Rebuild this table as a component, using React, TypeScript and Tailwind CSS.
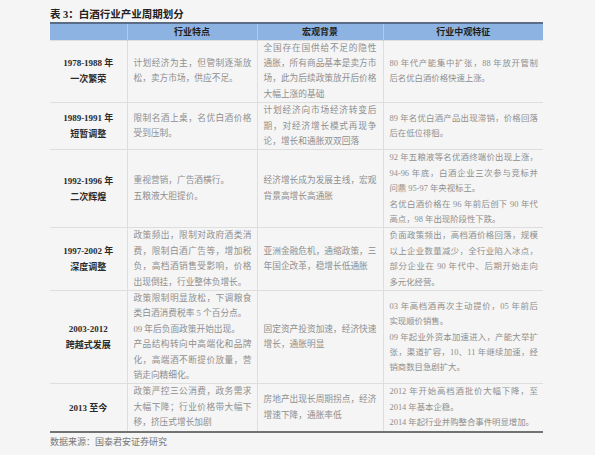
type Row = {
  period: string[];
  features: string[];
  macro: string[];
  traits: string[];
};

const rows: Row[] = [
  {
    period: ["1978-1988 年", "一次繁荣"],
    features: ["计划经济为主，但管制逐渐放", "松，卖方市场，供应不足。"],
    macro: ["全国存在国供给不足的隐性", "通胀，所有商品基本是卖方市", "场，此为后续政策放开后价格", "大幅上涨的基础"],
    traits: ["80 年代产能集中扩张，88 年放开管制", "后名优白酒价格快速上涨。"],
  },
  {
    period: ["1989-1991 年", "短暂调整"],
    features: ["限制名酒上桌，名优白酒价格", "受到压制。"],
    macro: ["计划经济向市场经济转变后", "期，对经济增长模式再现争", "论，增长和通胀双双回落"],
    traits: ["89 年名优白酒产品出现滞销，价格回落", "后在低位徘徊。"],
  },
  {
    period: ["1992-1996 年", "二次辉煌"],
    features: ["重视营销，广告酒横行。", "五粮液大胆提价。"],
    macro: ["经济增长成为发展主线，宏观", "背景高增长高通胀"],
    traits: [
      "92 年五粮液等名优酒终端价出现上涨，",
      "94-96 年底，白酒企业三次参与竞标并",
      "问鼎 95-97 年央视标王。",
      "名优白酒价格在 96 年前后创下 90 年代",
      "高点，98 年出现阶段性下跌。",
    ],
  },
  {
    period: ["1997-2002 年", "深度调整"],
    features: ["政策频出，限制对政府酒类消", "费，限制白酒广告等，增加税", "负，高档酒销售受影响，价格", "出现倒挂，行业整体负增长。"],
    macro: ["亚洲金融危机，通缩政策，三", "年国企改革，稳增长低通胀"],
    traits: ["负面政策频出，高档酒价格回落，规模", "以上企业数量减少，全行业陷入冰点，", "部分企业在 90 年代中、后期开始走向", "多元化经营。"],
  },
  {
    period: ["2003-2012", "跨越式发展"],
    features: [
      "政策限制明显放松，下调粮食",
      "类白酒消费税率 5 个百分点。",
      "09 年后负面政策开始出现。",
      "产品结构转向中高端化和品牌",
      "化，高端酒不断提价放量，营",
      "销走向精细化。",
    ],
    macro: ["固定资产投资加速，经济快速", "增长，通胀明显"],
    traits: [
      "03 年高档酒再次主动提价，05 年前后",
      "实现顺价销售。",
      "09 年起业外资本加速进入，产能大举扩",
      "张，渠道扩容，10、11 年继续加速，经",
      "销商数目急剧扩大。",
    ],
  },
  {
    period: ["2013 至今"],
    features: ["政策严控三公消费，政务需求", "大幅下降；行业价格带大幅下", "移，挤压式增长加剧"],
    macro: ["房地产出现长周期拐点，经济", "增速下降，通胀率低"],
    traits: ["2012 年开始高档酒批价大幅下降，至", "2014 年基本企稳。", "2014 年起行业并购整合事件明显增加。"],
  },
];

function Lines({ lines }: { lines: string[] }) {
  return (
    <>
      {lines.map((line, i) => {
        const plain = i === lines.length - 1 || line.endsWith("。");
        return (
          <div
            key={i}
            className={
              plain
                ? "overflow-visible whitespace-nowrap"
                : "overflow-visible whitespace-nowrap text-justify [text-align-last:justify]"
            }
          >
            {line}
          </div>
        );
      })}
    </>
  );
}

export default function App() {
  return (
    <div
      className="h-[455px] w-[595px] overflow-hidden bg-[#f5f5f5] pl-[50px] pt-[8px]"
      style={{ fontFamily: '"Liberation Serif", "Noto Sans CJK SC", serif' }}
    >
      <h1 className="text-[10.5px] font-bold leading-[14px] text-[#222]">表 3：白酒行业产业周期划分</h1>

      <table className="w-[493px] table-fixed border-collapse">
        <colgroup>
          <col className="w-[77px]" />
          <col className="w-[130px]" />
          <col className="w-[126px]" />
          <col className="w-[160px]" />
        </colgroup>
        <thead>
          <tr className="h-[17px] border-t-2 border-[#5b6c86] bg-[#8db3e2] text-[9px] font-bold leading-[14px] text-[#1e1e1e]">
            <th className="p-0" />
            <th className="border-l border-[#b3c9e8] p-0 text-center">行业特点</th>
            <th className="border-l border-[#b3c9e8] p-0 text-center">宏观背景</th>
            <th className="border-l border-[#b3c9e8] p-0 text-center">行业中观特征</th>
          </tr>
        </thead>
        <tbody>
          {rows.map((row, i) => (
            <tr
              key={i}
              className={
                i === rows.length - 1
                  ? "border-b-2 border-t border-b-[#727272] border-t-[#dedede]"
                  : "border-t border-[#dedede]"
              }
            >
              <td className="p-0 text-center align-middle text-[9px] font-bold leading-[16px] text-[#2a2a2a]">
                {row.period.map((p) => (
                  <div key={p}>{p}</div>
                ))}
              </td>
              <td className="border-l border-[#dedede] py-0 pl-[6px] pr-[5px] align-middle text-[8.7px] leading-[15.4px] text-[#8f8f8f]">
                <Lines lines={row.features} />
              </td>
              <td className="border-l border-[#dedede] py-0 pl-[6px] pr-[6px] align-middle text-[8.7px] leading-[15.4px] text-[#8f8f8f]">
                <Lines lines={row.macro} />
              </td>
              <td className="border-l border-[#dedede] py-0 pl-[6px] pr-[5px] align-middle text-[8.4px] leading-[15.4px] text-[#8f8f8f]">
                <Lines lines={row.traits} />
              </td>
            </tr>
          ))}
        </tbody>
      </table>

      <p className="mt-[3px] text-[9px] leading-[12px] text-[#777]">数据来源：国泰君安证券研究</p>
    </div>
  );
}
